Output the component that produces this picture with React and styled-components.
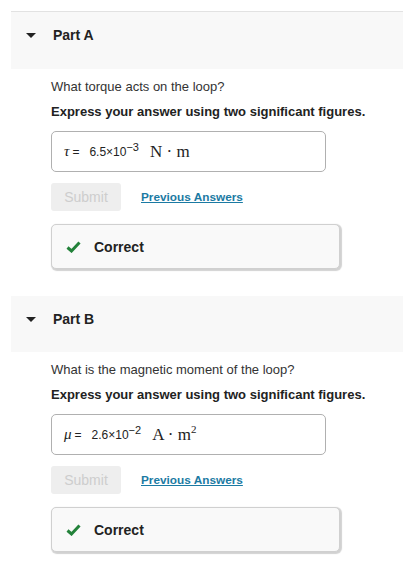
import React from "react";
import styled, { createGlobalStyle } from "styled-components";

const Global = createGlobalStyle`
  body {
    margin: 0;
    background: #fff;
    font-family: "Liberation Sans", Arial, sans-serif;
    color: #333;
  }
`;

const Page = styled.div`
  padding: 11px 0 0 11px;
`;

const Part = styled.section`
  display: flex;
  flex-direction: column;
`;

const Header = styled.div`
  box-sizing: border-box;
  height: ${(p) => (p.$first ? "58px" : "56px")};
  background: #f8f8f8;
  border-top: ${(p) => (p.$first ? "1px solid #e2e2e2" : "none")};
  display: flex;
  align-items: flex-start;
  padding: 14px 0 0 15px;
  gap: 17px;
`;

const Caret = styled.span`
  margin-top: 7px;
  width: 0;
  height: 0;
  border-left: 5px solid transparent;
  border-right: 5px solid transparent;
  border-top: 5px solid #222;
`;

const Title = styled.span`
  font-size: 14px;
  line-height: 18px;
  font-weight: bold;
  color: #222;
`;

const Body = styled.div`
  padding: 9px 0 27px 40px;
  display: flex;
  flex-direction: column;
  align-items: flex-start;
`;

const Question = styled.p`
  margin: 0;
  font-size: 13px;
  line-height: 18px;
  color: #333;
`;

const Hint = styled.p`
  margin: 7px 0 0;
  font-size: 13px;
  line-height: 18px;
  font-weight: bold;
  color: #222;
`;

const AnswerBox = styled.div`
  margin-top: 10px;
  box-sizing: border-box;
  width: 275px;
  height: 41px;
  border: 1px solid #b0b0b0;
  border-radius: 5px;
  display: flex;
  align-items: center;
  padding-left: 12px;
  color: #222;
`;

const Sym = styled.span`
  font-family: "Liberation Serif", "Times New Roman", serif;
  font-style: italic;
  font-size: 15px;
`;

const Eq = styled.span`
  font-size: 12px;
  margin: 0 10px 0 3px;
`;

const Value = styled.span`
  font-size: 12px;
  sup {
    font-size: 11px;
    vertical-align: 5px;
    line-height: 0;
  }
`;

const Unit = styled.span`
  font-family: "Liberation Serif", "Times New Roman", serif;
  font-size: 17px;
  margin-left: 11px;
  sup {
    font-size: 11px;
    vertical-align: 7px;
    line-height: 0;
  }
`;

const Actions = styled.div`
  margin-top: 11px;
  display: flex;
  align-items: center;
  gap: 20px;
`;

const Submit = styled.button`
  width: 70px;
  height: 28px;
  border: none;
  border-radius: 3px;
  background: #eeeeee;
  color: #cdcdcd;
  font-family: inherit;
  font-size: 14px;
  padding: 0;
`;

const PrevLink = styled.a`
  font-size: 11.8px;
  font-weight: bold;
  color: #1b7aa3;
  text-decoration: underline;
  cursor: pointer;
`;

const Feedback = styled.div`
  margin-top: 13px;
  box-sizing: border-box;
  width: 289px;
  height: 45px;
  background: #f9f9f9;
  border: 1px solid #d0d0d0;
  border-radius: 5px;
  box-shadow: 1px 1px 1px 1px rgba(0, 0, 0, 0.18);
  display: flex;
  align-items: center;
  padding-left: 14px;
  gap: 13px;
`;

const FeedbackText = styled.span`
  font-size: 14px;
  font-weight: bold;
  color: #222;
`;

const Check = () => (
  <svg width="15" height="12" viewBox="0 0 15 12">
    <path d="M1.5 6.5 L5.5 10 L13.5 1.5" fill="none" stroke="#23823a" strokeWidth="3" />
  </svg>
);

const parts = [
  {
    name: "Part A",
    question: "What torque acts on the loop?",
    sym: "τ",
    mant: "6.5",
    exp: "−3",
    unit: <>N · m</>,
  },
  {
    name: "Part B",
    question: "What is the magnetic moment of the loop?",
    sym: "μ",
    mant: "2.6",
    exp: "−2",
    unit: (
      <>
        A · m<sup>2</sup>
      </>
    ),
  },
];

export default function App() {
  return (
    <Page>
      <Global />
      {parts.map((p, i) => (
        <Part key={p.name}>
          <Header $first={i === 0}>
            <Caret />
            <Title>{p.name}</Title>
          </Header>
          <Body>
            <Question>{p.question}</Question>
            <Hint>Express your answer using two significant figures.</Hint>
            <AnswerBox>
              <Sym>{p.sym}</Sym>
              <Eq>=</Eq>
              <Value>
                {p.mant}×10<sup>{p.exp}</sup>
              </Value>
              <Unit>{p.unit}</Unit>
            </AnswerBox>
            <Actions>
              <Submit disabled>Submit</Submit>
              <PrevLink>Previous Answers</PrevLink>
            </Actions>
            <Feedback>
              <Check />
              <FeedbackText>Correct</FeedbackText>
            </Feedback>
          </Body>
        </Part>
      ))}
    </Page>
  );
}
